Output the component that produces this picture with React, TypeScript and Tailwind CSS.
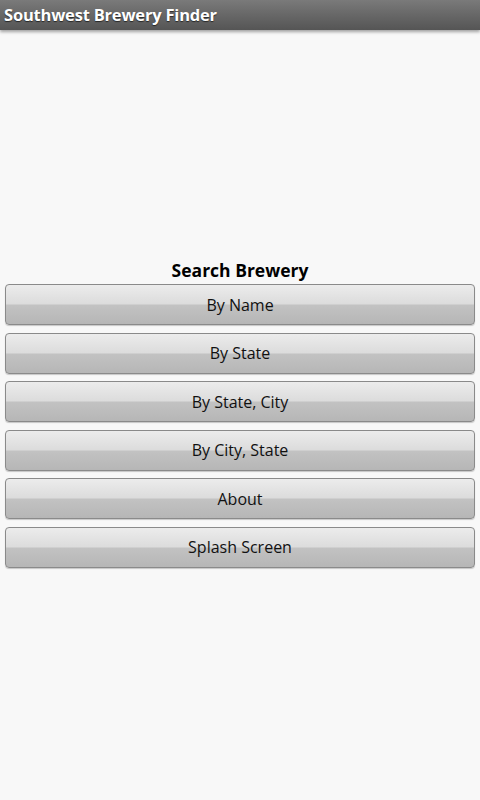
import React from 'react';

const options = ['By Name', 'By State', 'By State, City', 'By City, State', 'About', 'Splash Screen'];

const App: React.FC = () => {
  return (
    <div className="w-[480px] h-[800px] bg-[#f8f8f8] flex flex-col font-['Open_Sans','Noto_Sans',sans-serif]">
      {/* Title bar */}
      <div className="h-[30px] bg-gradient-to-b from-[#7a7a7a] to-[#555555] flex items-center px-[4px] shadow-[0_2px_3px_rgba(0,0,0,0.35)]">
        <span className="text-white text-[16.5px] font-bold tracking-[-0.2px] [text-shadow:0_1px_1px_rgba(0,0,0,0.6)]">
          Southwest Brewery Finder
        </span>
      </div>

      {/* Menu */}
      <div className="flex flex-col px-[5px] pt-[228px]">
        <h2 className="text-center text-black text-[17.5px] font-bold leading-[24px] mb-[2px]">Search Brewery</h2>
        <div className="flex flex-col gap-[7.6px]">
          {options.map((label) => (
            <button
              key={label}
              className="h-[41px] w-full rounded-[4px] border border-[#8a8a8a] bg-[linear-gradient(to_bottom,#ececec_0%,#dcdcdc_48%,#c2c2c2_52%,#b6b6b6_100%)] shadow-[0_1px_1px_rgba(0,0,0,0.2)] text-[16px] text-[#111] flex items-center justify-center"
            >
              {label}
            </button>
          ))}
        </div>
      </div>
    </div>
  );
};

export default App;
